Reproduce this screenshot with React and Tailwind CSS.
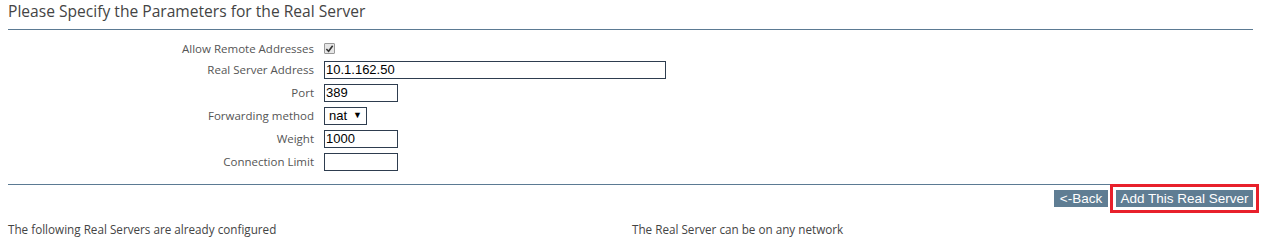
import React from "react";

const sans = { fontFamily: "'Liberation Sans', Arial, sans-serif" };

const Row = ({ label, children, short }) => (
  <>
    <div className={`text-right text-[11.5px] text-[#555] ${short ? "h-[16px] leading-[17px]" : "leading-[18px]"}`}>{label}</div>
    <div className={`flex items-center ${short ? "h-[16px]" : "h-[18px]"}`}>{children}</div>
  </>
);

const Field = ({ value, wide }) => (
  <input
    readOnly
    value={value}
    className={`${wide ? "w-[342px]" : "w-[74px]"} h-[18px] border border-[#2e3d4f] px-[1px] text-[13px] text-black outline-none`}
    style={sans}
  />
);

export default function App() {
  return (
    <div className="w-[1267px] h-[242px] bg-white overflow-hidden" style={{ fontFamily: "'Open Sans', 'Noto Sans', sans-serif" }}>
      <div className="pl-[8px] pr-[14px]">
        <h1 className="pt-[1px] text-[15.6px] leading-[20px] text-[#444] h-[29px]">
          Please Specify the Parameters for the Real Server
        </h1>
        <div className="h-px bg-[#5b7a93]" />
      </div>

      <div className="grid grid-cols-[314px_1fr] gap-x-[10px] gap-y-[5px] mt-[10px]">
        <Row label="Allow Remote Addresses" short>
          <span className="w-[11px] h-[11px] border border-[#999] bg-[#e6e6e6] rounded-[1px] flex items-center justify-center">
            <svg viewBox="0 0 10 10" className="w-[9px] h-[9px]">
              <path d="M1.5 5.5 L4 8 L8.5 2" fill="none" stroke="#333" strokeWidth="1.8" />
            </svg>
          </span>
        </Row>
        <Row label="Real Server Address">
          <Field value="10.1.162.50" wide />
        </Row>
        <Row label="Port">
          <Field value="389" />
        </Row>
        <Row label="Forwarding method">
          <div
            className="h-[18px] w-[43px] border border-[#2e3d4f] flex items-center pl-[4px] gap-[6px] text-[13px] text-black"
            style={sans}
          >
            <span>nat</span>
            <span className="text-[9px]">▼</span>
          </div>
        </Row>
        <Row label="Weight">
          <Field value="1000" />
        </Row>
        <Row label="Connection Limit">
          <Field value="" />
        </Row>
      </div>

      <div className="pl-[8px] pr-[14px] mt-[13px]">
        <div className="h-px bg-[#5b7a93]" />
      </div>

      <div className="flex justify-end items-center gap-[2px] pr-[8px] -mt-px">
        <button className="h-[17px] w-[54px] bg-[#5f7d93] text-white text-[13.5px] leading-[17px]" style={sans}>
          &lt;-Back
        </button>
        <div className="border-[3px] border-[#e8202b] p-[3px] flex">
          <button className="h-[17px] w-[137px] bg-[#5f7d93] text-white text-[13.5px] leading-[17px] whitespace-nowrap" style={sans}>
            Add This Real Server
          </button>
        </div>
      </div>

      <div className="flex text-[11.7px] leading-[16px] text-[#444] mt-[8px]">
        <div className="pl-[8px] w-[632px]">The following Real Servers are already configured</div>
        <div>The Real Server can be on any network</div>
      </div>
    </div>
  );
}
